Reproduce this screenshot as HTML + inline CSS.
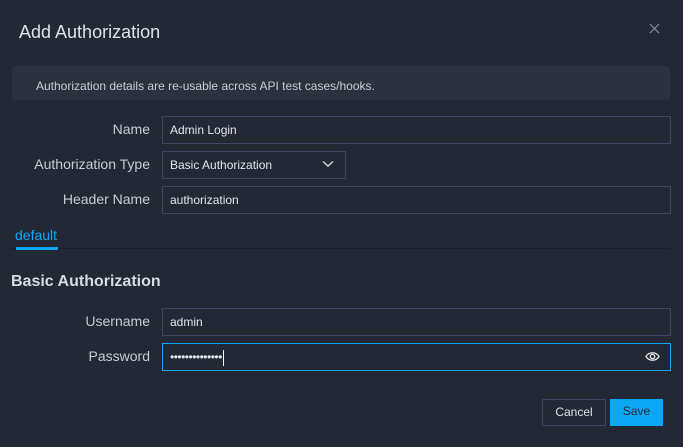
<!DOCTYPE html><html><head><style>
body{margin:0;width:683px;height:447px;background:#222834;font-family:"Liberation Sans",sans-serif;position:relative;overflow:hidden;color:#d8dbe0}
.a{position:absolute}
.l{position:absolute;right:533px;font-size:14px;color:#c9ccd2;text-align:right}
.in{position:absolute;left:162px;width:506px;height:25px;border:1px solid #3b4863;font-size:12px;line-height:25px;padding-left:7px;box-sizing:border-box;color:#e4e6ea}
.btn{position:absolute;top:399px;height:27px;box-sizing:border-box;font-size:12px;text-align:center;line-height:25px}
</style></head><body>
<div class="a" style="left:19px;top:22px;font-size:18px;color:#e0e2e6">Add Authorization</div>
<svg class="a" style="left:649px;top:23px" width="11" height="11"><path d="M1 1L10 10M10 1L1 10" stroke="#8a909a" stroke-width="1.2"/></svg>
<div class="a" style="left:12px;top:66px;width:658px;height:34px;background:#2c323d;border-radius:3px"></div>
<div class="a" style="left:36px;top:79px;font-size:12px;color:#c9ccd2">Authorization details are re-usable across API test cases/hooks.</div>
<div class="l" style="top:121px">Name</div>
<div class="in" style="top:116px;height:28px;width:509px;line-height:26px">Admin Login</div>
<div class="l" style="top:156px">Authorization Type</div>
<div class="in" style="top:151px;height:28px;width:184px;line-height:26px">Basic Authorization</div>
<svg class="a" style="left:322px;top:160px" width="12" height="8"><path d="M1 1.5L6 6L11 1.5" stroke="#d8dbe0" stroke-width="1.4" fill="none"/></svg>
<div class="l" style="top:191px">Header Name</div>
<div class="in" style="top:186px;height:28px;width:509px;line-height:26px">authorization</div>
<div class="a" style="left:15px;top:227px;font-size:14px;color:#10a8f5">default</div>
<div class="a" style="left:12px;top:248px;width:658px;height:1px;background:#1a1f27"></div>
<div class="a" style="left:16px;top:247px;width:42px;height:3px;background:#10a8f5"></div>
<div class="a" style="left:11px;top:273px;font-size:16px;font-weight:bold;color:#d8dbe0">Basic Authorization</div>
<div class="l" style="top:313px">Username</div>
<div class="in" style="top:308px;height:28px;width:509px;line-height:26px">admin</div>
<div class="l" style="top:348px">Password</div>
<div class="in" style="top:343px;height:28px;width:509px;line-height:26px;border-color:#10a8f5;font-size:12px;letter-spacing:-0.5px">••••••••••••••<span style="display:inline-block;width:1px;height:16px;background:#fff;vertical-align:middle;margin-left:1px"></span></div>
<svg class="a" style="left:645px;top:350px" width="15" height="13"><path d="M1 6.5C4 1.5 11 1.5 14 6.5C11 11.5 4 11.5 1 6.5Z" stroke="#e0e2e6" stroke-width="1.3" fill="none"/><circle cx="7.5" cy="6.5" r="2.2" stroke="#e0e2e6" stroke-width="1.3" fill="none"/></svg>
<div class="btn" style="left:542px;width:64px;border:1px solid #3b4863;color:#e0e2e6">Cancel</div>
<div class="btn" style="left:610px;width:53px;background:#0aa7f5;color:#1b2a3a">Save</div>
</body></html>
